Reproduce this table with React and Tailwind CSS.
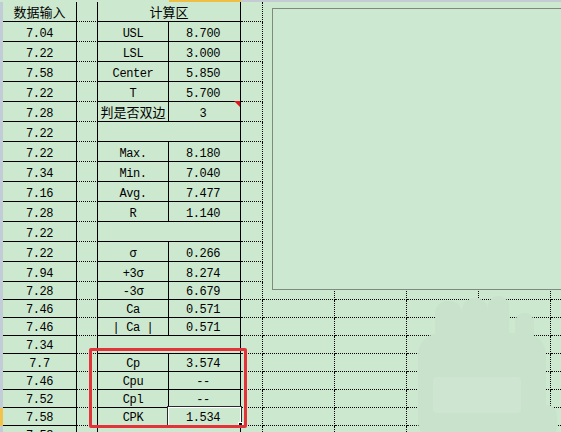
import React from "react";

// ─── Fonts / text styles ─────────────────────────────────────────────────────
const MONO = "font-['Liberation_Mono',monospace] text-[12px] tracking-[-0.4px] leading-[14px] text-black";
const CJK = "font-['Noto_Sans_CJK_SC','Noto_Sans',sans-serif] text-[13px] leading-[14px] text-black pb-[2px]";

const isCjk = (s) => /[\u4e00-\u9fff]/.test(s || "");

// ─── Sheet data ──────────────────────────────────────────────────────────────
const rows = [
  { a: "7.04", c: "USL", d: "8.700" },
  { a: "7.22", c: "LSL", d: "3.000" },
  { a: "7.58", c: "Center", d: "5.850" },
  { a: "7.22", c: "T", d: "5.700" },
  { a: "7.28", c: "判是否双边", d: "3", note: true },
  { a: "7.22", blank: true },
  { a: "7.22", c: "Max.", d: "8.180" },
  { a: "7.34", c: "Min.", d: "7.040" },
  { a: "7.16", c: "Avg.", d: "7.477" },
  { a: "7.28", c: "R", d: "1.140" },
  { a: "7.22", blank: true },
  { a: "7.22", c: "σ", d: "0.266" },
  { a: "7.94", c: "+3σ", d: "8.274" },
  { a: "7.28", c: "-3σ", d: "6.679", short: true },
  { a: "7.46", c: "Ca", d: "0.571", short: true },
  { a: "7.46", c: "| Ca |", d: "0.571", short: true },
  { a: "7.34", blank: true, short: true },
  { a: "7.7", c: "Cp", d: "3.574", short: true },
  { a: "7.46", c: "Cpu", d: "--", short: true },
  { a: "7.52", c: "Cpl", d: "--", short: true },
  { a: "7.58", c: "CPK", d: "1.534", short: true, sel: true },
  { a: "7.58", blank: true, short: true },
];

// ─── Cell ────────────────────────────────────────────────────────────────────
const Cell = ({ className, children, extra = "" }) => (
  <div className={`shrink-0 flex items-end justify-center ${className}`}>
    {children != null && (
      <span className={`whitespace-pre ${isCjk(children) ? CJK : MONO} ${extra}`}>{children}</span>
    )}
  </div>
);

const SOLID = "border-r border-b border-black";
const DOTB = "border-r border-b border-black [border-bottom-style:dotted]";
const DOT = "border-r border-b border-black border-dotted";

const Row = ({ r, header }) => (
  <div className={`flex ${r.short ? "h-[18px]" : "h-[20px]"}`}>
    <div className={`w-[3px] shrink-0 ${r.sel ? "bg-[#f3c24a]" : "bg-[#c2ccd6]"}`} />
    <Cell className={`w-[74px] ${SOLID}`}>{r.a}</Cell>
    <Cell className={`w-[21px] ${DOTB}`} />
    {r.blank || header ? (
      <Cell className={`w-[143px] ${SOLID}`}>{header ? "计算区" : null}</Cell>
    ) : (
      <>
        <Cell className={`w-[71px] ${SOLID}`}>{r.c}</Cell>
        <Cell className={`w-[72px] ${SOLID}`} extra="pr-[3px]">
          {r.d}
        </Cell>
      </>
    )}
    <Cell className={`w-[22px] ${DOT}`} />
    <Cell className={`w-[72px] ${DOT}`} />
    <Cell className={`w-[72px] ${DOT}`} />
    <Cell className={`w-[72px] ${DOT}`} />
    <Cell className={`w-[72px] ${DOT}`} />
    <div className="flex-1 border-b border-black border-dotted" />
  </div>
);

// ─── Main ────────────────────────────────────────────────────────────────────
export default function App() {
  return (
    <div className="relative w-[561px] h-[432px] overflow-hidden bg-[#cce8cf]">
      {/* column header edge */}
      <div className="flex h-[2px]">
        <div className="w-[169px] bg-[#cce8cf]" />
        <div className="w-[72px] bg-[#f0bd45]" />
        <div className="flex-1 bg-[#c4cbd2]" />
      </div>

      <Row r={{ a: "数据输入" }} header />
      {rows.map((r, i) => (
        <Row key={i} r={r} />
      ))}

      {/* chart object */}
      <div className="absolute left-[263px] top-[2px] w-[298px] h-[288px] bg-[#cce8cf]">
        <div className="absolute left-[9px] top-[6px] right-[-20px] bottom-0 border border-[#7d8b7f] bg-[#cde8d0]" />
      </div>

      {/* comment marker */}
      <svg className="absolute left-[234px] top-[101px]" width="6" height="6" viewBox="0 0 6 6">
        <polygon points="0,0 6,0 6,6" fill="#e0141e" />
      </svg>

      {/* selected cell */}
      <div className="absolute left-[167px] top-[406px] w-[75px] h-[21px] border border-[#2a2a2a]">
        <div className="absolute inset-0 border border-white" />
      </div>
      <div className="absolute left-[238px] top-[422px] w-[5px] h-[5px] bg-black border border-white" />

      {/* red highlight box */}
      <div className="absolute left-[89px] top-[348px] w-[158px] h-[80px] border-[3px] border-[#e2333b] rounded-[2px]" />

      {/* faint watermark */}
      <svg className="absolute left-[415px] top-[295px]" width="146" height="137" viewBox="0 0 146 137">
        <g fill="#c8e2cb">
          <rect x="20" y="6" width="27" height="80" rx="13" />
          <rect x="47" y="3" width="26" height="80" rx="13" />
          <rect x="73" y="1" width="21" height="80" rx="10" />
          <rect x="100" y="18" width="19" height="80" rx="9" />
          <rect x="3" y="38" width="128" height="110" rx="22" />
          <rect x="118" y="110" width="24" height="32" rx="10" />
        </g>
        <rect x="18" y="82" width="88" height="36" rx="4" fill="#cee6d1" />
      </svg>
    </div>
  );
}
